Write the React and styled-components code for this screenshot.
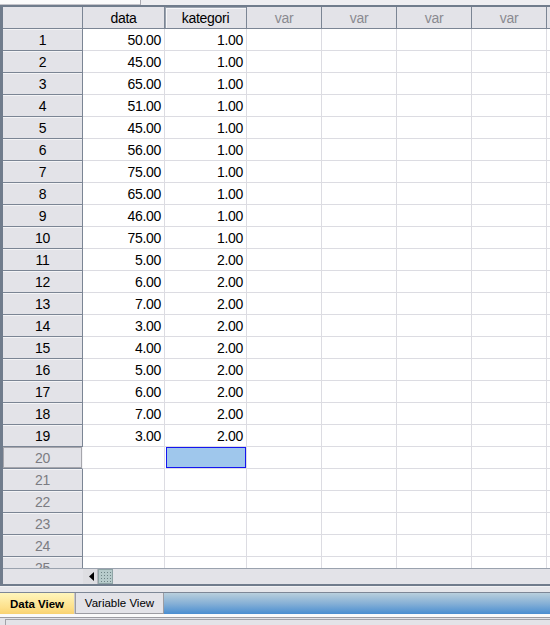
import styled, { createGlobalStyle, css } from 'styled-components';

// SPSS-style data editor, data view tab

const GlobalStyle = createGlobalStyle`
  html, body {
    margin: 0;
    padding: 0;
    background: #e3e3e8;
  }
  body {
    font-family: "Liberation Sans", Arial, sans-serif;
  }
`;

const FRAME = '#707c8c';
const HEAD_BG = '#e3e3e8';
const HEAD_LINE = '#7b8594';
const GRID_LINE = '#dcdce2';

const Window = styled.div`
  width: 550px;
  height: 625px;
  overflow: hidden;
  display: flex;
  flex-direction: column;
  background: #e3e3e8;
`;

const TopStrip = styled.div`
  height: 5px;
  display: flex;
  background: #eeeef1;
`;

const CellField = styled.div`
  width: 140px;
  background: #fbfbfb;
  border-right: 1px solid #a9a9b0;
  box-shadow: inset 0 -1px 0 #c4c4ca;
`;

const Frame = styled.div`
  border-top: 2px solid ${FRAME};
  border-left: 3px solid ${FRAME};
  border-bottom: 2px solid ${FRAME};
  display: flex;
  flex-direction: column;
`;

const Grid = styled.div`
  display: grid;
  grid-template-columns: 80px 82px 82px repeat(5, 75px);
  grid-auto-rows: 22px;
  height: 561px;
  overflow: hidden;
  background: #fff;
  font-size: 14px;
  letter-spacing: -0.3px;
`;

const HeadCell = styled.div`
  box-sizing: border-box;
  background: ${HEAD_BG};
  border-right: 1px solid ${HEAD_LINE};
  border-bottom: 1px solid ${HEAD_LINE};
  display: flex;
  align-items: center;
  justify-content: center;
  color: ${p => (p.$empty ? '#8a8a90' : '#000')};
  ${p =>
    p.$current &&
    css`
      box-shadow: inset 1px 1px 0 #9aa2ae, inset 2px 2px 0 #f6f6f8;
    `}
`;

const RowHead = styled.div`
  box-sizing: border-box;
  background: ${HEAD_BG};
  border-right: 1px solid ${HEAD_LINE};
  border-bottom: 1px solid ${HEAD_LINE};
  box-shadow: inset 0 1px 0 #f4f4f6;
  display: flex;
  align-items: center;
  justify-content: center;
  color: ${p => (p.$empty ? '#7c7c82' : '#000')};
  ${p =>
    p.$current &&
    css`
      border-right-color: #f4f4f6;
      box-shadow: inset 0 0 0 1px #a6a6ac;
    `}
`;

const Cell = styled.div`
  box-sizing: border-box;
  border-right: 1px solid ${GRID_LINE};
  border-bottom: 1px solid ${GRID_LINE};
  display: flex;
  align-items: center;
  justify-content: flex-end;
  padding-right: 3px;
  color: #000;
  ${p =>
    p.$selected &&
    css`
      border-left: 1px solid #fff;
      background: #9fc7ec;
      box-shadow: inset 0 0 0 1px #1515f0;
    `}
`;

const ScrollRow = styled.div`
  height: 15px;
  display: flex;
  border-top: 1px solid #9aa2ae;
  box-sizing: content-box;
`;

const ScrollCorner = styled.div`
  width: 80px;
  background: ${HEAD_BG};
`;

const ArrowButton = styled.div`
  width: 15px;
  background: #dedee2;
  border-right: 1px solid #b8b8be;
  box-sizing: border-box;
  display: flex;
  align-items: center;
  justify-content: center;
  padding-left: 2px;
`;

const Thumb = styled.div`
  width: 15px;
  box-sizing: border-box;
  background-color: #b7cbcb;
  border: 1px solid #8fa4a6;
  background-image: radial-gradient(circle, #6f8486 0.6px, transparent 0.9px);
  background-size: 3px 3px;
  background-position: 1px 1px;
`;

const Track = styled.div`
  flex: 1;
  background: #e3e3e8;
`;

const Gap = styled.div`
  height: 6px;
  background: #e6e6ea;
  box-shadow: inset 0 1px 0 #f2f2f4;
`;

const TabBar = styled.div`
  height: 21px;
  display: flex;
  border-top: 1px solid #7d8796;
  font-size: 11.5px;
`;

const Tab = styled.div`
  width: ${p => p.$width}px;
  box-sizing: border-box;
  display: flex;
  align-items: center;
  justify-content: center;
  color: #000;
  ${p =>
    p.$active
      ? css`
          font-weight: bold;
          background: linear-gradient(#fff6bc, #fde08a 70%, #f9d271);
          border-right: 1px solid #c9c9c9;
        `
      : css`
          background: #e3e3e8;
          border: 1px solid #9c9ca2;
          border-top: none;
        `}
`;

const TabFill = styled.div`
  flex: 1;
  background: linear-gradient(#b9cfdc, #86b0d6 50%, #4a8ed1);
`;

const StatusArea = styled.div`
  flex: 1;
  border-top: 1px solid #fafafa;
  box-shadow: inset 0 2px 0 #fafafa, inset 0 3px 0 #9c9ca2;
  padding: 4px 0 0 5px;
  display: flex;
`;

const StatusBox = styled.div`
  flex: 1;
  border: 1px solid #a2a2a8;
  border-right: none;
  border-bottom: none;
  background: #e3e3e8;
`;

const ArrowLeft = () => (
  <svg width="5" height="9" viewBox="0 0 5 9">
    <path d="M5 0 L0 4.5 L5 9 Z" fill="#000" />
  </svg>
);

const values = [50, 45, 65, 51, 45, 56, 75, 65, 46, 75, 5, 6, 7, 3, 4, 5, 6, 7, 3];
const kategori = values.map((_, i) => (i < 10 ? 1 : 2));
const columns = ['data', 'kategori', 'var', 'var', 'var', 'var', 'var'];

export default function App() {
  const rows = [];
  for (let r = 1; r <= 25; r++) {
    const filled = r <= values.length;
    rows.push(
      <RowHead key={`h${r}`} $empty={!filled} $current={r === 20}>
        {r}
      </RowHead>
    );
    columns.forEach((_, c) => {
      let text = '';
      if (filled && c === 0) text = values[r - 1].toFixed(2);
      if (filled && c === 1) text = kategori[r - 1].toFixed(2);
      rows.push(
        <Cell key={`c${r}-${c}`} $selected={r === 20 && c === 1}>
          {text}
        </Cell>
      );
    });
  }

  return (
    <Window>
      <GlobalStyle />
      <TopStrip>
        <CellField />
      </TopStrip>
      <Frame>
        <Grid>
          <HeadCell />
          {columns.map((name, i) => (
            <HeadCell key={i} $empty={name === 'var'} $current={i === 1}>
              {name}
            </HeadCell>
          ))}
          {rows}
        </Grid>
        <ScrollRow>
          <ScrollCorner />
          <ArrowButton>
            <ArrowLeft />
          </ArrowButton>
          <Thumb />
          <Track />
        </ScrollRow>
      </Frame>
      <Gap />
      <TabBar>
        <Tab $active $width={75}>Data View</Tab>
        <Tab $width={89}>Variable View</Tab>
        <TabFill />
      </TabBar>
      <StatusArea>
        <StatusBox />
      </StatusArea>
    </Window>
  );
}
